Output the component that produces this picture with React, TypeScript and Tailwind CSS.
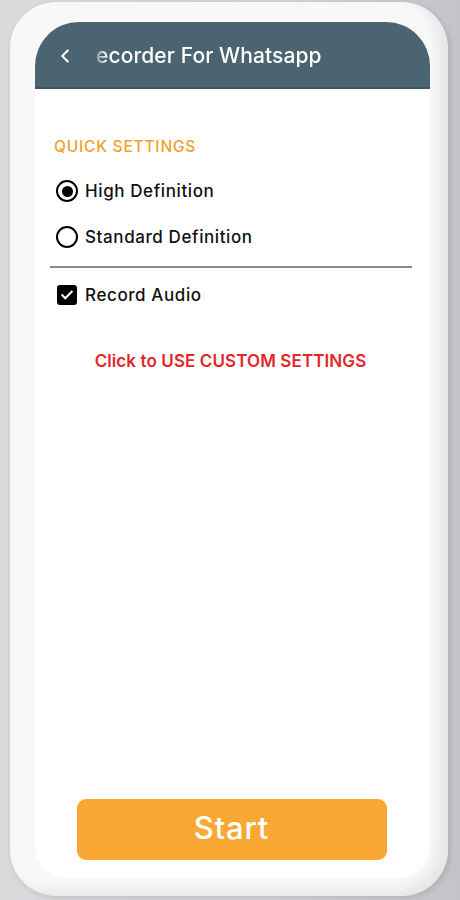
import { ChevronLeft } from 'lucide-react';

const font = { fontFamily: 'Inter, "Noto Sans", sans-serif' };

function Radio({ checked, label }: { checked?: boolean; label: string }) {
  return (
    <div className="flex items-center gap-[7px] h-[24px]">
      <div className="w-[22px] h-[22px] rounded-full border-[2.5px] border-black flex items-center justify-center">
        {checked && <div className="w-[11px] h-[11px] rounded-full bg-black" />}
      </div>
      <span className="text-[17px] font-medium text-[#111] tracking-[0.6px]">{label}</span>
    </div>
  );
}

export default function App() {
  return (
    <div
      className="w-[460px] h-[900px] bg-[linear-gradient(90deg,#dadadd_0%,#d4d5d9_60%,#c3c4c9_100%)] overflow-hidden"
      style={font}
    >
      <div className="ml-[10px] mt-[2px] w-[438px] h-[894px] rounded-[46px] bg-[#f8f8f8] shadow-[inset_-10px_-6px_12px_rgba(0,0,0,0.07),2px_2px_6px_rgba(0,0,0,0.12)] pl-[25px] pr-[18px] pt-[20px] pb-[18px]">
        <div className="h-full rounded-t-[44px] rounded-b-[32px] bg-white flex flex-col overflow-hidden">
          {/* Header */}
          <div className="h-[67px] bg-[#4a6571] border-b-[2px] border-[#3e5661] flex items-center pl-[19px] pt-[3px]">
            <ChevronLeft size={22} strokeWidth={2.2} className="text-white" />
            <span className="ml-[20px] text-[21px] font-medium text-white tracking-[0.1px] [mask-image:linear-gradient(90deg,rgba(0,0,0,0.35)_0px,#000_12px)]">
              ecorder For Whatsapp
            </span>
          </div>

          {/* Quick settings */}
          <div className="pl-[19px] pr-[18px] pt-[46px]">
            <p className="text-[15.5px] font-medium text-[#f0a12a] tracking-[0.8px]">QUICK SETTINGS</p>
            <div className="mt-[21px] pl-[2px] flex flex-col gap-[22px]">
              <Radio checked label="High Definition" />
              <Radio label="Standard Definition" />
            </div>
          </div>
          <div className="mt-[17px] ml-[15px] mr-[18px] h-[2px] bg-[#8a8a8a]" />
          <div className="mt-[16px] pl-[22px] flex items-center gap-[8px] h-[22px]">
            <div className="w-[20px] h-[20px] rounded-[3px] bg-black flex items-center justify-center">
              <svg width="14" height="14" viewBox="0 0 24 24" fill="none" stroke="white" strokeWidth="3.5" strokeLinecap="square">
                <path d="M4 12.5l5 5L20 6.5" />
              </svg>
            </div>
            <span className="text-[17px] font-medium text-[#111] tracking-[0.6px]">Record Audio</span>
          </div>

          <p className="mt-[43px] text-center text-[17px] font-semibold text-[#e3262a] tracking-[0.1px] pr-[4px]">
            Click to USE CUSTOM SETTINGS
          </p>

          <div className="flex-1" />

          <div className="pb-[18px] flex justify-center pr-[2px]">
            <button className="w-[310px] h-[61px] rounded-[9px] bg-[#f8a833] text-white text-[31px] font-medium tracking-[0.8px] pb-[3px]">
              Start
            </button>
          </div>
        </div>
      </div>
    </div>
  );
}
